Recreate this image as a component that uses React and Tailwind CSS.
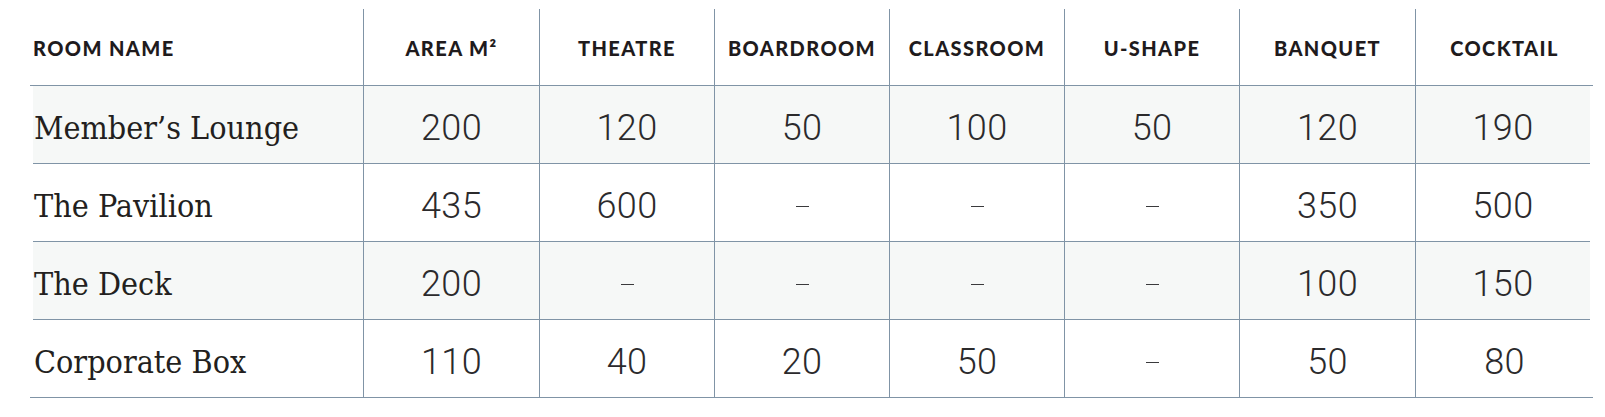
import React from "react";

const headers = [
  "ROOM NAME",
  "AREA M²",
  "THEATRE",
  "BOARDROOM",
  "CLASSROOM",
  "U-SHAPE",
  "BANQUET",
  "COCKTAIL",
];

const rooms = [
  { name: "Member’s Lounge", values: ["200", "120", "50", "100", "50", "120", "190"] },
  { name: "The Pavilion", values: ["435", "600", "–", "–", "–", "350", "500"] },
  { name: "The Deck", values: ["200", "–", "–", "–", "–", "100", "150"] },
  { name: "Corporate Box", values: ["110", "40", "20", "50", "–", "50", "80"] },
];

// full width rows (header + last row) vs inset striped rows
const fullCols = "grid-cols-[333px_176px_175px_175px_175px_175px_176px_178px]";
const insetCols = "grid-cols-[330px_176px_175px_175px_175px_175px_176px_175px]";

const Row = ({ room, index, last }) => {
  const striped = index % 2 === 0;
  return (
    <div
      className={`grid h-[78px] border-b border-[#8094a6] ${
        last ? fullCols : `${insetCols} mx-[3px]`
      } ${striped ? "bg-[#f6f8f7]" : "bg-white"}`}
    >
      <div
        className={`flex items-center pt-[6px] ${last ? "pl-[4px]" : "pl-[1px]"} text-[32px] text-[#231f20]`}
        style={{ fontFamily: '"DejaVu Serif Condensed", "DejaVu Serif", serif' }}
      >
        {room.name}
      </div>
      {room.values.map((v, i) =>
        v === "–" ? (
          <div key={i} className="flex items-center justify-center border-l border-[#8094a6] pt-[7px]">
            <span className="h-[1px] w-[13px] bg-[#3a3a3c]" />
          </div>
        ) : (
          <div
            key={i}
            className="flex items-center justify-center border-l border-[#8094a6] pt-[7px] font-['Roboto',sans-serif] text-[36px] font-light tracking-[0.01em] text-[#2b2a2c]"
          >
            {v}
          </div>
        )
      )}
    </div>
  );
};

export default function App() {
  return (
    <div className="h-[417px] w-[1605px] bg-white pl-[30px] pt-[9px]">
      <div className="w-[1563px]">
        <div className={`grid h-[77px] border-b border-[#8094a6] pt-[2px] ${fullCols}`}>
          {headers.map((h, i) => (
            <div
              key={h}
              className={`flex items-center font-['Lato',sans-serif] text-[20px] font-black tracking-[0.07em] text-[#1f1b1d] ${
                i === 0 ? "pl-[3px]" : "justify-center border-l border-[#8094a6] -mt-[2px] pt-[2px]"
              }`}
            >
              {h}
            </div>
          ))}
        </div>
        {rooms.map((room, i) => (
          <Row key={room.name} room={room} index={i} last={i === rooms.length - 1} />
        ))}
      </div>
    </div>
  );
}
